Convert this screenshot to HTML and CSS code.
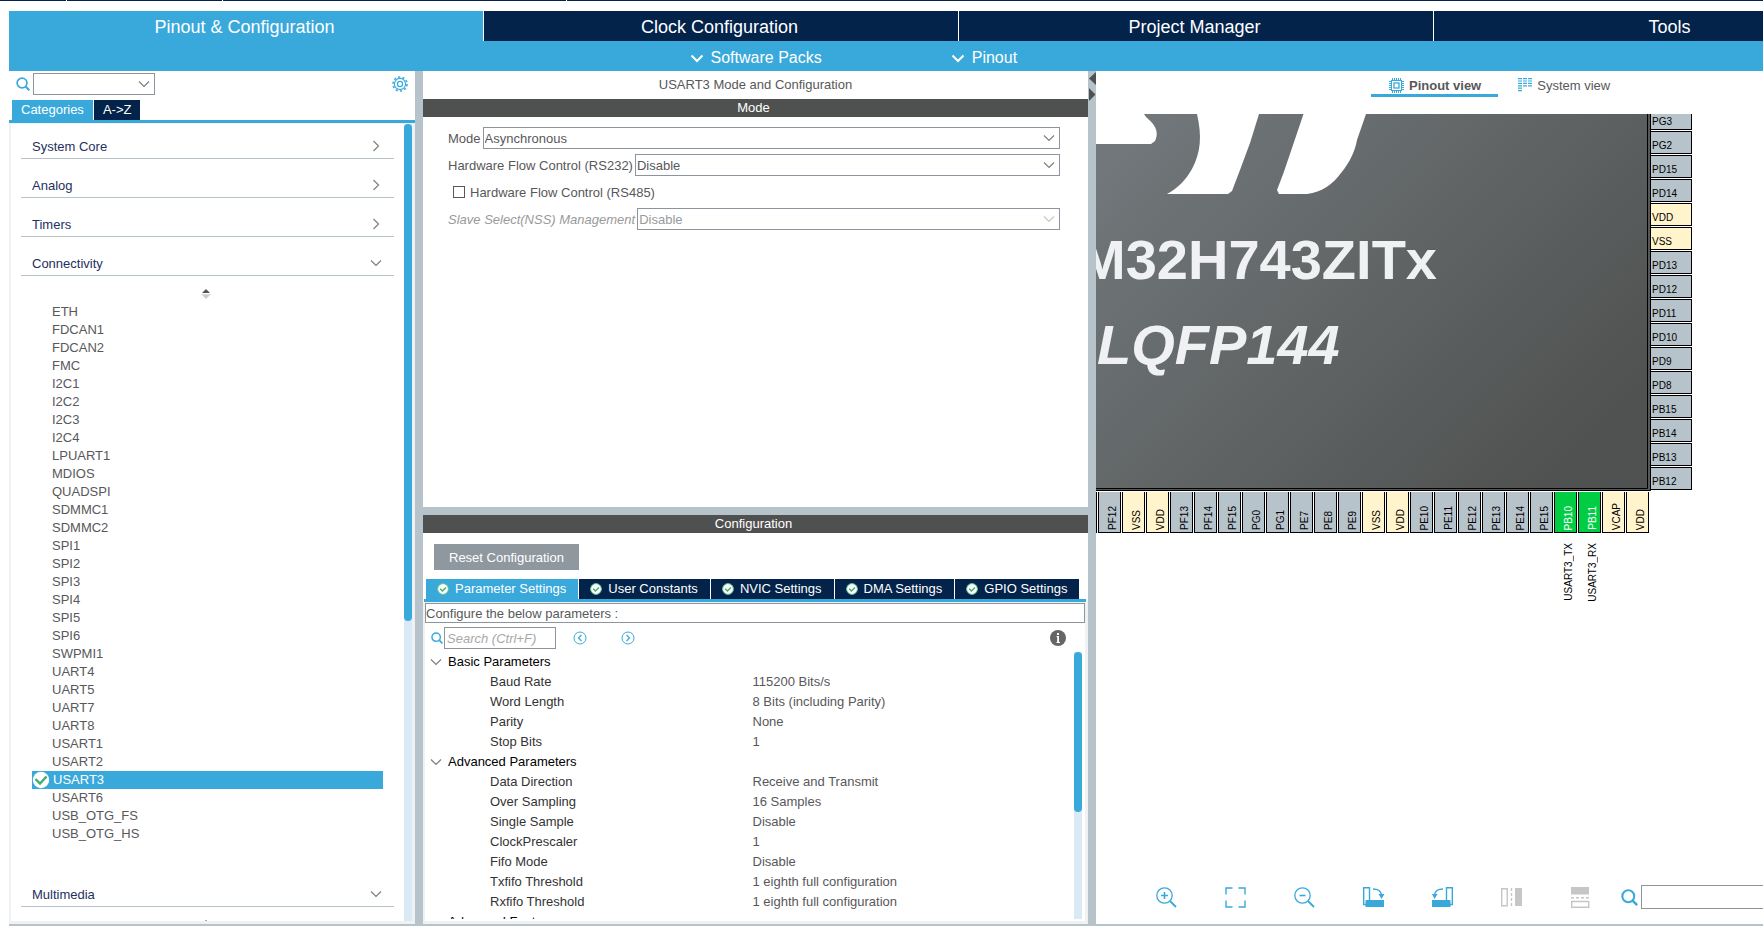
FILE: index.html
```
<!DOCTYPE html>
<html lang="en">
	<head>
		<meta charset="utf-8">
		<title>Pinout &amp; Configuration</title>
		<link rel="stylesheet" href="styles.css">
	</head>
	<body>
	<!-- shared icons -->
	<svg class="defs" aria-hidden="true">
		<symbol id="search" viewBox="0 0 14 14"><circle cx="6" cy="6" r="4.9" fill="none" stroke="#39a9dc" stroke-width="1.7"/><path d="M9.5 9.5L13.3 13.3" stroke="#39a9dc" stroke-width="2"/></symbol>
		<symbol id="right" viewBox="0 0 12 12"><path d="M3.5 1L8.5 6L3.5 11" fill="none" stroke="#7f7f7f" stroke-width="1.2"/></symbol>
		<symbol id="down" viewBox="0 0 12 12"><path d="M1 3.5L6 8.5L11 3.5" fill="none" stroke="#7f7f7f" stroke-width="1.2"/></symbol>
		<symbol id="menu" viewBox="0 0 14 14"><path d="M1.5 4.5L7 10L12.5 4.5" fill="none" stroke="#fff" stroke-width="2"/></symbol>
		<symbol id="check" viewBox="0 0 12 12"><circle cx="6" cy="6" r="5.4" fill="#fff" stroke="#5fc28c"/><path d="M3.2 5.8L5.4 8L9 4.4" fill="none" stroke="#3fae6d" stroke-width="1.4"/></symbol>
		<symbol id="sort" viewBox="0 0 10 12"><path d="M1 5L5 1L9 5z" fill="#555"/><path d="M0 6h10v1H0z" fill="#ddd"/><path d="M1 7L5 11L9 7z" fill="#ccc"/></symbol>
	</svg>

	<div class="strip"><span class="strip-a"></span><span class="strip-b"></span><span class="strip-c"></span><span class="strip-d"></span></div>

	<header class="header">
		<nav class="main-tabs">
			<button class="main-tab active">Pinout &amp; Configuration</button>
			<button class="main-tab">Clock Configuration</button>
			<button class="main-tab">Project Manager</button>
			<button class="main-tab">Tools</button>
		</nav>
		<div class="sub-menu">
			<button class="menu-btn"><svg width="14" height="14"><use href="#menu"/></svg>Software Packs</button>
			<button class="menu-btn"><svg width="14" height="14"><use href="#menu"/></svg>Pinout</button>
		</div>
	</header>

	<main class="workspace">
		<section class="left">
			<div class="finder">
				<svg width="14" height="14"><use href="#search"/></svg>
				<select class="combo finder-combo" aria-label="Find peripheral"><option></option></select>
				<button class="gear" aria-label="Settings">
					<svg width="16" height="16" viewBox="0 0 16 16" fill="none" stroke="#39a9dc"><circle cx="8" cy="8" r="5.6" stroke-width="1.1"/><circle cx="8" cy="8" r="7" stroke-width="1.6" stroke-dasharray="2.2 2.2"/><circle cx="8" cy="8" r="2.6" stroke-width="1.2"/></svg>
				</button>
			</div>
			<div class="tabs left-tabs">
				<button class="tab active">Categories</button>
				<button class="tab">A-&gt;Z</button>
			</div>
			<div class="tree-box">
				<div class="tree">
					<button class="category">System Core<svg width="12" height="12"><use href="#right"/></svg></button>
					<button class="category">Analog<svg width="12" height="12"><use href="#right"/></svg></button>
					<button class="category">Timers<svg width="12" height="12"><use href="#right"/></svg></button>
					<button class="category">Connectivity<svg width="12" height="12"><use href="#down"/></svg></button>
					<div class="sort"><svg width="10" height="12"><use href="#sort"/></svg></div>
					<ul class="periphs">
						<li>ETH</li>
						<li>FDCAN1</li>
						<li>FDCAN2</li>
						<li>FMC</li>
						<li>I2C1</li>
						<li>I2C2</li>
						<li>I2C3</li>
						<li>I2C4</li>
						<li>LPUART1</li>
						<li>MDIOS</li>
						<li>QUADSPI</li>
						<li>SDMMC1</li>
						<li>SDMMC2</li>
						<li>SPI1</li>
						<li>SPI2</li>
						<li>SPI3</li>
						<li>SPI4</li>
						<li>SPI5</li>
						<li>SPI6</li>
						<li>SWPMI1</li>
						<li>UART4</li>
						<li>UART5</li>
						<li>UART7</li>
						<li>UART8</li>
						<li>USART1</li>
						<li>USART2</li>
						<li class="selected"><svg width="18" height="18" viewBox="0 0 18 18"><circle cx="9" cy="9" r="8.2" fill="#fff"/><path d="M3.5 8L8 12.5L14.5 5.5" fill="none" stroke="#3fae6d" stroke-width="2.4"/></svg>USART3</li>
						<li>USART6</li>
						<li>USB_OTG_FS</li>
						<li>USB_OTG_HS</li>
					</ul>
					<button class="category">Multimedia<svg width="12" height="12"><use href="#down"/></svg></button>
					<div class="sort"><svg width="10" height="12"><use href="#sort"/></svg></div>
				</div>
				<div class="scroll"><div class="thumb tree-thumb"></div></div>
			</div>
		</section>

		<div class="splitter"></div>

		<section class="middle">
			<div class="mode">
				<h1 class="title">USART3 Mode and Configuration</h1>
				<h2 class="bar">Mode</h2>
				<form class="mode-form">
					<div class="field">
						<label for="mode">Mode</label>
						<select id="mode" class="combo"><option>Asynchronous</option></select>
					</div>
					<div class="field">
						<label for="rs232">Hardware Flow Control (RS232)</label>
						<select id="rs232" class="combo"><option>Disable</option></select>
					</div>
					<div class="field check-field">
						<input type="checkbox" id="rs485">
						<label for="rs485">Hardware Flow Control (RS485)</label>
					</div>
					<div class="field off">
						<label for="nss">Slave Select(NSS) Management</label>
						<select id="nss" class="combo" disabled><option>Disable</option></select>
					</div>
				</form>
			</div>
			<div class="splitter-h"></div>
			<div class="config">
				<h2 class="bar">Configuration</h2>
				<button class="reset">Reset Configuration</button>
				<div class="tabs config-tabs">
					<button class="tab active"><svg width="12" height="12"><use href="#check"/></svg>Parameter Settings</button>
					<button class="tab"><svg width="12" height="12"><use href="#check"/></svg>User Constants</button>
					<button class="tab"><svg width="12" height="12"><use href="#check"/></svg>NVIC Settings</button>
					<button class="tab"><svg width="12" height="12"><use href="#check"/></svg>DMA Settings</button>
					<button class="tab"><svg width="12" height="12"><use href="#check"/></svg>GPIO Settings</button>
				</div>
				<div class="params">
					<div class="hint">Configure the below parameters :</div>
					<div class="param-search">
						<svg width="12" height="12"><use href="#search"/></svg>
						<input type="text" placeholder="Search (Ctrl+F)" aria-label="Search">
						<button class="nav-btn" aria-label="Previous"><svg width="14" height="14" viewBox="0 0 14 14" fill="none" stroke="#39a9dc"><circle cx="7" cy="7" r="6"/><path d="M8.5 4L5.5 7L8.5 10" stroke-width="1.3"/></svg></button>
						<button class="nav-btn" aria-label="Next"><svg width="14" height="14" viewBox="0 0 14 14" fill="none" stroke="#39a9dc"><circle cx="7" cy="7" r="6"/><path d="M5.5 4L8.5 7L5.5 10" stroke-width="1.3"/></svg></button>
						<button class="info" aria-label="Information"><svg width="16" height="16" viewBox="0 0 16 16"><circle cx="8" cy="8" r="8" fill="#666"/><path d="M7 3h2v2H7zM6.5 6H9v6h1v1H6.5v-1h.7V7h-.7z" fill="#fff"/></svg></button>
					</div>
					<div class="param-box">
						<div class="param-view">
							<table class="param-table">
								<tbody>
									<tr><th colspan="2"><svg width="12" height="12"><use href="#down"/></svg>Basic Parameters</th></tr>
									<tr><td>Baud Rate</td><td>115200 Bits/s</td></tr>
									<tr><td>Word Length</td><td>8 Bits (including Parity)</td></tr>
									<tr><td>Parity</td><td>None</td></tr>
									<tr><td>Stop Bits</td><td>1</td></tr>
									<tr><th colspan="2"><svg width="12" height="12"><use href="#down"/></svg>Advanced Parameters</th></tr>
									<tr><td>Data Direction</td><td>Receive and Transmit</td></tr>
									<tr><td>Over Sampling</td><td>16 Samples</td></tr>
									<tr><td>Single Sample</td><td>Disable</td></tr>
									<tr><td>ClockPrescaler</td><td>1</td></tr>
									<tr><td>Fifo Mode</td><td>Disable</td></tr>
									<tr><td>Txfifo Threshold</td><td>1 eighth full configuration</td></tr>
									<tr><td>Rxfifo Threshold</td><td>1 eighth full configuration</td></tr>
									<tr><th colspan="2"><svg width="12" height="12"><use href="#down"/></svg>Advanced Features</th></tr>
								</tbody>
							</table>
						</div>
						<div class="scroll"><div class="thumb param-thumb"></div></div>
					</div>
				</div>
			</div>
		</section>

		<div class="splitter">
			<svg width="8" height="32" viewBox="0 0 8 32"><path d="M8 1v13L1 7.5zM1 17v13L7.5 23.5z" fill="#4f5150"/></svg>
		</div>

		<section class="right">
			<div class="view-tabs">
				<button class="view-tab active">
					<svg width="15" height="15" viewBox="0 0 15 15" fill="none" stroke="#39a9dc"><path d="M3.5 0v15M5.5 0v15M7.5 0v15M9.5 0v15M11.5 0v15M0 3.5h15M0 5.5h15M0 7.5h15M0 9.5h15M0 11.5h15"/><rect x="2.5" y="2.5" width="10" height="10" fill="#fff"/><rect x="5" y="5" width="5" height="5" stroke-width="1.3"/></svg>Pinout view
				</button>
				<button class="view-tab">
					<svg width="14" height="14" viewBox="0 0 14 14" stroke="#39a9dc" stroke-width="1.2"><path d="M0 .6h4M5 .6h4M10 .6h4M0 3h4M5 3h4M10 3h4M0 5.4h4M5 5.4h4M10 5.4h4M0 7.8h4M5 7.8h4M10 7.8h4M0 10.2h4M0 12.6h4"/></svg>System view
				</button>
			</div>
			<div class="canvas">
				<div class="chip-row">
					<svg class="die" width="555" height="377" viewBox="0 0 555 377">
						<defs>
							<linearGradient id="body" gradientUnits="userSpaceOnUse" x1="60" y1="0" x2="440" y2="377">
								<stop offset="0" stop-color="#71777a"/>
								<stop offset="1" stop-color="#505251"/>
							</linearGradient>
						</defs>
						<path d="M0 0H555V377H0z" fill="#555756"/>
						<path d="M0 0H551V374H0z" fill="url(#body)"/>
						<path d="M551.5 0V374.5H0M554.5 0V376.5H0" fill="none" stroke="#000"/>
						<path d="M0 0H48C50 4 54 6 57 10C61 15 62 21 59 27L55 30H0z" fill="#fff"/>
						<path d="M101 0C106 22 105 38 96 55C89 67 82 74 71 80H132L136 77L144 56L154 29L163 0z" fill="#fff"/>
						<path d="M207.5 0L196 34L187.5 59L181 76L183 80H211C226 78 237 70 245 59C254 48 259 37 261 26L270 0z" fill="#fff"/>
						<text x="341" y="165" class="part" text-anchor="end">STM32H743ZITx</text>
						<text x="1" y="250" class="part package">LQFP144</text>
					</svg>
					<ul class="pins-right">
						<li>PG3</li>
						<li>PG2</li>
						<li>PD15</li>
						<li>PD14</li>
						<li class="power">VDD</li>
						<li class="power">VSS</li>
						<li>PD13</li>
						<li>PD12</li>
						<li>PD11</li>
						<li>PD10</li>
						<li>PD9</li>
						<li>PD8</li>
						<li>PB15</li>
						<li>PB14</li>
						<li>PB13</li>
						<li>PB12</li>
					</ul>
				</div>
				<ul class="pins-bottom">
					<li><span>PF12</span></li>
					<li class="power"><span>VSS</span></li>
					<li class="power"><span>VDD</span></li>
					<li><span>PF13</span></li>
					<li><span>PF14</span></li>
					<li><span>PF15</span></li>
					<li><span>PG0</span></li>
					<li><span>PG1</span></li>
					<li><span>PE7</span></li>
					<li><span>PE8</span></li>
					<li><span>PE9</span></li>
					<li class="power"><span>VSS</span></li>
					<li class="power"><span>VDD</span></li>
					<li><span>PE10</span></li>
					<li><span>PE11</span></li>
					<li><span>PE12</span></li>
					<li><span>PE13</span></li>
					<li><span>PE14</span></li>
					<li><span>PE15</span></li>
					<li class="used"><span>PB10</span><em class="signal">USART3_TX</em></li>
					<li class="used"><span>PB11</span><em class="signal">USART3_RX</em></li>
					<li class="power"><span>VCAP</span></li>
					<li class="power"><span>VDD</span></li>
				</ul>
			</div>
			<div class="toolbar">
				<button aria-label="Zoom in"><svg width="21" height="21" viewBox="0 0 21 21" fill="none" stroke="#39a9dc" stroke-width="1.3"><circle cx="8.5" cy="8.5" r="7.7"/><path d="M14 14L20 20" stroke-width="1.8"/><path d="M5 8.5h7M8.5 5v7" stroke-width="1.6"/></svg></button>
				<button aria-label="Best fit"><svg width="21" height="21" viewBox="0 0 21 21" fill="none" stroke="#39a9dc" stroke-width="1.4"><path d="M7.5 1H1v6.5M13.5 1H20v6.5M1 13.5V20h6.5M20 13.5V20h-6.5"/></svg></button>
				<button aria-label="Zoom out"><svg width="21" height="21" viewBox="0 0 21 21" fill="none" stroke="#39a9dc" stroke-width="1.3"><circle cx="8.5" cy="8.5" r="7.7"/><path d="M14 14L20 20" stroke-width="1.8"/><path d="M5.5 8.5h6" stroke-width="1.6"/></svg></button>
				<button aria-label="Rotate right"><svg width="21" height="21" viewBox="0 0 21 21" fill="none" stroke="#39a9dc" stroke-width="1.4"><path d="M3 17.5H.7V.7H6.5V13"/><path d="M2.5 13H21v7H2.5z" fill="#39a9dc" stroke="none"/><path d="M10 2C15 2 18 4 18.5 8"/><path d="M15.5 7H21.5L18.5 12z" fill="#39a9dc" stroke="none"/></svg></button>
				<button aria-label="Rotate left"><svg width="21" height="21" viewBox="0 0 21 21" fill="none" stroke="#39a9dc" stroke-width="1.4"><path d="M18 17.5H20.3V.7H14.5V13"/><path d="M0 13H18.5v7H0z" fill="#39a9dc" stroke="none"/><path d="M11 2C6 2 3 4 2.5 8"/><path d="M0 7H5.5L2.5 12z" fill="#39a9dc" stroke="none"/></svg></button>
				<button aria-label="Mirror horizontally" disabled><svg width="21" height="21" viewBox="0 0 21 21" fill="none" stroke="#c6c6c6" stroke-width="1.4"><path d="M.7 1.7h5.5v17H.7z"/><path d="M10.5 1v18" stroke-dasharray="3 2"/><path d="M14 1h7v18h-7z" fill="#c6c6c6" stroke="none"/></svg></button>
				<button aria-label="Mirror vertically" disabled><svg width="21" height="21" viewBox="0 0 21 21" fill="none" stroke="#c6c6c6" stroke-width="1.4"><path d="M1.7 14.5h17v5.8h-17z"/><path d="M1 10.7h18" stroke-dasharray="3 2"/><path d="M1 0h18v7.5H1z" fill="#c6c6c6" stroke="none"/></svg></button>
				<label class="pin-search" for="pin-search"><svg width="17" height="17"><use href="#search"/></svg></label>
				<input type="text" id="pin-search" aria-label="Find pin">
			</div>
		</section>
	</main>
	</body>
</html>
```
FILE: styles.css
```
* {
  box-sizing: border-box;
}
html,
body {
  height: 100%;
}
body {
  margin: 0;
  padding-bottom: 1px;
  display: flex;
  flex-direction: column;
  overflow: hidden;
  background: #fff;
  color: #58585a;
  font-family: "Liberation Sans", Arial, sans-serif;
  font-size: 13px;
}
button,
input,
select {
  margin: 0;
  padding: 0;
  border: 0;
  border-radius: 0;
  background: none;
  color: inherit;
  font: inherit;
}
ul {
  margin: 0;
  padding: 0;
  list-style: none;
}
svg {
  display: block;
  flex: none;
}
.defs {
  position: absolute;
  width: 0;
  height: 0;
}

/* bottom edge of the breadcrumb bar */
.strip {
  display: flex;
  flex: none;
  gap: 1px;
  height: 1px;
}
.strip span {
  background: #03234b;
}
.strip-a {
  width: 66px;
}
.strip-b {
  width: 155px;
}
.strip-c {
  width: 343px;
}
.strip-d {
  flex: 1;
}

.header {
  flex: none;
  margin: 10px 0 0 9px;
  background: #39a9dc;
  color: #fff;
}
.main-tabs {
  display: grid;
  grid-template-columns: repeat(4, calc((100% + 146px) / 4));
  overflow: hidden;
}
.main-tab {
  height: 30px;
  padding: 3px 3px 0 0;
  border-right: 1px solid #fff;
  background: #03234b;
  font-size: 18px;
}
.main-tab.active {
  background: #39a9dc;
}
.sub-menu {
  display: flex;
  gap: 129px;
  height: 30px;
  padding: 3px 0 0 38.8%;
}
.menu-btn {
  display: flex;
  align-items: center;
  gap: 7px;
  font-size: 16px;
}

.workspace {
  flex: 1;
  min-height: 0;
  margin-left: 9px;
  display: grid;
  grid-template-columns: minmax(0, 406fr) 8px minmax(0, 665fr) 8px minmax(0, 667fr);
  grid-template-rows: minmax(0, 1fr);
  border-bottom: 2px solid #b7c3ca;
}
.splitter,
.splitter-h {
  background: #b7c3ca;
}

/* tabs */
.tabs {
  display: flex;
  gap: 1px;
  flex: none;
  border-bottom: 3px solid #39a9dc;
}
.tab {
  display: flex;
  align-items: center;
  gap: 6px;
  height: 20px;
  padding: 0 12px 1px 11px;
  background: #03234b;
  color: #fff;
  white-space: nowrap;
}
.tab.active {
  background: #39a9dc;
}

.combo {
  flex: 1;
  min-width: 0;
  height: 22px;
  padding: 0 1px;
  border: 1px solid #8c959d;
  appearance: none;
  background: #fff url("data:image/svg+xml,%3Csvg xmlns='http://www.w3.org/2000/svg' width='12' height='12'%3E%3Cpath d='M1 3.5L6 8.5L11 3.5' fill='none' stroke='%237f7f7f' stroke-width='1.2'/%3E%3C/svg%3E") no-repeat right 4px center;
}

/* left panel */
.left,
.middle,
.right {
  display: flex;
  flex-direction: column;
  min-height: 0;
}
.finder {
  display: flex;
  align-items: center;
  gap: 3px;
  height: 29px;
  padding: 0 7px 3px;
}
.finder-combo {
  flex: 0 0 122px;
}
.gear {
  margin-left: auto;
}
.left-tabs {
  padding-left: 3px;
}
.left-tabs .tab {
  padding: 0 9px 1px;
}
.tree-box {
  flex: 1;
  min-height: 0;
  display: flex;
  border: solid #eff1f3;
  border-width: 1px 3px 3px 2px;
}
.tree {
  flex: 1;
  min-width: 0;
  overflow: hidden;
  padding: 8px 10px 0;
}
.category {
  display: flex;
  align-items: center;
  justify-content: space-between;
  width: 100%;
  height: 27px;
  margin-bottom: 12px;
  padding: 2px 12px 0 11px;
  border-bottom: 1px solid #b7c3ca;
  color: #24305e;
}
.sort {
  display: flex;
  justify-content: center;
  padding-right: 3px;
}
.periphs {
  padding: 3px 11px 37px;
}
.periphs li {
  height: 18px;
  padding-left: 20px;
  line-height: 18px;
}
.periphs .selected {
  display: flex;
  gap: 3px;
  padding-left: 0;
  background: #39a9dc;
  color: #fff;
}
.scroll {
  flex: none;
  width: 8px;
  background: #d9e9f6;
}
.thumb {
  border-radius: 4px;
  background: #39a9dc;
}
.tree-thumb {
  height: 62.4%;
}

/* mode panel */
.mode {
  flex: 436 1 0;
}
.splitter-h {
  flex: none;
  height: 8px;
}
.config {
  flex: 409 1 0;
  min-height: 0;
  display: flex;
  flex-direction: column;
}
.title,
.bar {
  margin: 0;
  font-size: 13px;
  font-weight: normal;
  text-align: center;
}
.title {
  line-height: 28px;
}
.bar {
  flex: none;
  padding-right: 4px;
  line-height: 18px;
  background: #4f5150;
  color: #fff;
}
.mode-form {
  display: flex;
  flex-direction: column;
  gap: 5px;
  padding: 10px 28px 0 25px;
}
.field {
  display: flex;
  align-items: center;
  gap: 2px;
  height: 22px;
}
.check-field {
  gap: 5px;
  padding-left: 5px;
}
.check-field input {
  width: 12px;
  height: 12px;
  appearance: none;
  border: 1px solid #58585a;
}
.off {
  color: #9a9a9a;
}
.off label {
  font-style: italic;
}
.off .combo {
  opacity: 1;
  background-image: url("data:image/svg+xml,%3Csvg xmlns='http://www.w3.org/2000/svg' width='12' height='12'%3E%3Cpath d='M1 3.5L6 8.5L11 3.5' fill='none' stroke='%23c8c8c8' stroke-width='1.2'/%3E%3C/svg%3E");
}

/* configuration panel */
.reset {
  flex: none;
  align-self: flex-start;
  height: 26px;
  margin: 11px 0 9px 11px;
  padding: 0 15px;
  background: #8f989f;
  color: #fff;
}
.config-tabs {
  margin: 0 2px 0 1px;
  padding-left: 2px;
}
.params {
  flex: 1;
  min-height: 0;
  display: flex;
  flex-direction: column;
  border: solid #eff1f3;
  border-width: 1px 3px 3px 2px;
}
.hint {
  flex: none;
  height: 20px;
  border: 1px solid #8c959d;
  line-height: 19px;
}
.param-search {
  flex: none;
  display: flex;
  align-items: center;
  height: 22px;
  margin: 4px 0 3px;
  padding: 0 19px 0 6px;
}
.param-search input {
  width: 112px;
  height: 22px;
  margin: 0 17px 0 1px;
  padding: 0 2px;
  border: 1px solid #8c959d;
}
.param-search input::placeholder {
  color: #a8a8a8;
  font-style: italic;
  opacity: 1;
}
.nav-btn {
  margin-right: 34px;
}
.info {
  margin-left: auto;
}
.param-box {
  flex: 1;
  min-height: 0;
  display: flex;
  padding: 0 3px 2px 0;
}
.param-view {
  flex: 1;
  overflow: hidden;
}
.param-table {
  width: 100%;
  border-collapse: collapse;
  table-layout: fixed;
}
.param-table th,
.param-table td {
  height: 20px;
  padding: 0;
  line-height: 20px;
}
.param-table th {
  color: #000;
  font-weight: normal;
  text-align: left;
}
.param-table th svg {
  display: inline-block;
  margin: 0 6px 0 5px;
  vertical-align: -2px;
}
.param-table td {
  width: 50%;
  padding-left: 3px;
}
.param-table td:first-child {
  padding-left: 65px;
  color: #333;
}
.param-thumb {
  height: 60%;
}

/* pinout view */
.view-tabs {
  flex: none;
  display: flex;
  gap: 12px;
  height: 26px;
  margin-left: 275px;
}
.view-tab {
  display: flex;
  align-items: center;
  gap: 5px;
  padding: 5px 8px 0;
  border-bottom: 3px solid transparent;
}
.view-tab.active {
  padding: 5px 17px 0 18px;
  border-color: #39a9dc;
  font-weight: bold;
}
.canvas {
  flex: 1;
  min-height: 0;
  margin-top: 17px;
  overflow: hidden;
  color: #000;
  font-size: 10px;
}
.chip-row {
  display: flex;
  height: 378px;
}
.part {
  fill: #f0f1f3;
  font-size: 56px;
  font-weight: bold;
}
.package {
  font-style: italic;
}
.pins-right {
  display: flex;
  flex-direction: column;
  justify-content: flex-end;
  gap: 1px;
  width: 41px;
  height: 376px;
}
.pins-right li {
  flex: none;
  height: 23px;
  padding: 5px 0 0 1px;
  border: 1px solid #000;
  border-left: 0;
  background: #b7c3ca;
  line-height: 18px;
}
.pins-bottom {
  display: flex;
  gap: 1px;
  height: 41px;
  padding-left: 1px;
  border-left: 1px solid #000;
}
.pins-bottom li {
  position: relative;
  display: flex;
  align-items: flex-end;
  flex: none;
  width: 23px;
  height: 41px;
  padding: 0 0 2px 5px;
  border: 1px solid #000;
  border-top: 0;
  background: #b7c3ca;
  line-height: 18px;
}
.pins-bottom span,
.signal {
  writing-mode: vertical-rl;
  transform: rotate(180deg);
}
.signal {
  position: absolute;
  top: 51px;
  left: 5px;
  color: #000;
  font-style: normal;
}
.pins-right .power,
.pins-bottom .power {
  background: #fff4cb;
}
.pins-bottom .used {
  background: #00cc44;
  color: #fff;
}
.toolbar {
  flex: none;
  display: flex;
  align-items: center;
  gap: 48px;
  height: 24px;
  margin-bottom: 15px;
  padding-left: 60px;
  overflow: hidden;
}
.toolbar button {
  flex: none;
}
.pin-search {
  flex: none;
  margin: 0 -45px 0 -18px;
}
.toolbar input {
  flex: none;
  width: 200px;
  height: 24px;
  border: 1px solid #8c959d;
}
```
